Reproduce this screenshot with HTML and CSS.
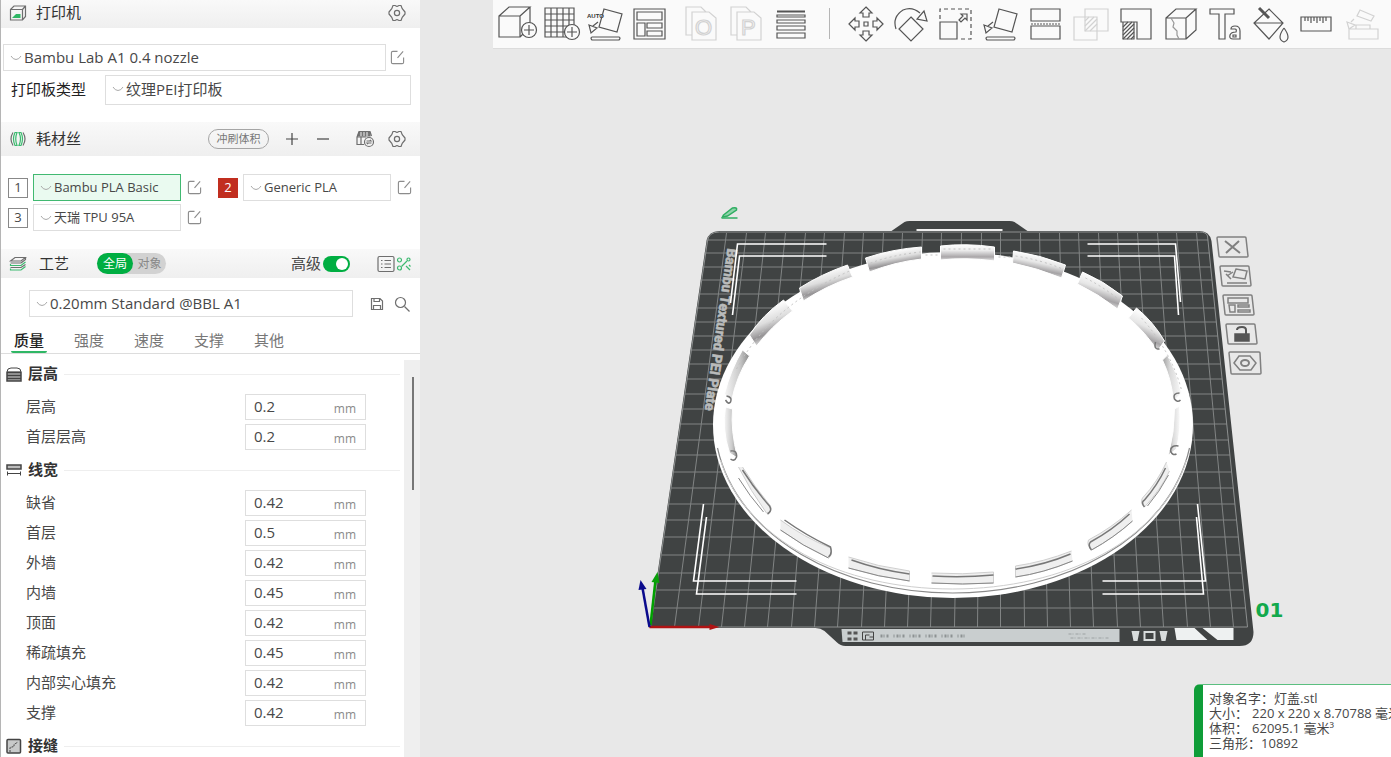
FILE: index.html
```html
<!DOCTYPE html>
<html lang="zh-CN">
<head>
  <meta charset="UTF-8" />
  <meta name="viewport" content="width=device-width, initial-scale=1.0" />
  <title>灯盖.stl</title>
  <link rel="stylesheet" href="styles.css">
</head>
<body>
  <!-- shared icons -->
  <svg class="defs" width="0" height="0" aria-hidden="true">
    <symbol id="i-gear" viewBox="0 0 18 18">
      <path d="M5 1.5 H7 L9 2.5 L11 1.5 H13 L14.2 4.6 L17 8 V10 L14.2 13.4 L13 16.5 H11 L9 15.5 L7 16.5 H5 L3.8 13.4 L1 10 V8 L3.8 4.6 Z" stroke-linejoin="round"/>
      <circle cx="9" cy="9" r="2.6"/>
    </symbol>
    <symbol id="i-edit" viewBox="0 0 16 16">
      <path d="M8 1.5 H3 Q1.500 1.500 1.500 3 V13 Q1.500 14.500 3 14.500 H13 Q14.500 14.500 14.500 13 V8 M8 8.500 L14 1.500"/>
    </symbol>
    <symbol id="i-down" viewBox="0 0 12 12">
      <path d="M1 4 Q3 7.500 6 7.500 Q9 7.500 11 4"/>
    </symbol>
  </svg>

  <aside class="sidebar">
    <header class="bar bar-printer">
      <svg class="icon" viewBox="0 0 18 18"><path d="M1.5 5.500 L5 2 H16.500 V12.500 L13.500 16 H1.500 Z M1.500 5.500 H13.500 V16 M13.500 5.500 L16.500 2"/><path class="green-fill" d="M3 14 L7 10 H11.500 V14 Z"/></svg>
      <h2>打印机</h2>
      <button class="icon-btn push" aria-label="打印机设置"><svg class="icon"><use href="#i-gear"/></svg></button>
    </header>

    <div class="printer">
      <div class="line">
        <div class="combo combo-printer">
          <svg class="chev"><use href="#i-down"/></svg>
          <select aria-label="打印机"><option>Bambu Lab A1 0.4 nozzle</option></select>
        </div>
        <button class="icon-btn" aria-label="编辑打印机"><svg class="icon edit"><use href="#i-edit"/></svg></button>
      </div>
      <div class="line plate-line">
        <label for="plate">打印板类型</label>
        <div class="combo combo-plate">
          <svg class="chev"><use href="#i-down"/></svg>
          <select id="plate"><option>纹理PEI打印板</option></select>
        </div>
      </div>
    </div>

    <header class="bar bar-filament">
      <svg class="icon" viewBox="0 0 18 18"><path d="M4 2.500 Q0 9 4 15.500 M14 2.500 Q18 9 14 15.500"/><path class="green" d="M6 2.500 Q3 9 6 15.500 H8 Q5.500 9 8 2.500 Z M10 2.500 Q13 9 10 15.500 H12 Q15 9 12 2.500 Z"/></svg>
      <h2>耗材丝</h2>
      <button class="pill push">冲刷体积</button>
      <button class="icon-btn add" aria-label="添加耗材"><svg class="icon dark" viewBox="0 0 18 18"><path d="M9 3 V15 M3 9 H15"/></svg></button>
      <button class="icon-btn remove" aria-label="移除耗材"><svg class="icon dark" viewBox="0 0 18 18"><path d="M3 9 H15"/></svg></button>
      <button class="icon-btn sync" aria-label="同步耗材"><svg class="icon" viewBox="0 0 18 18"><path d="M8 14.500 H1 V7 L3 1.500 H14 L15.500 6 M1 7 H10 M5 7 V14"/><path d="M3 2.500 H14 V6 H2 Z" fill="#777"/><path d="M5 2 V6 M8 2 V6 M11 2 V6" stroke="#ddd"/><circle cx="13" cy="12" r="4.500"/><path d="M10.500 11 H15 L14 9.800 M15.500 13 H11 L12 14.200"/></svg></button>
      <button class="icon-btn" aria-label="耗材设置"><svg class="icon"><use href="#i-gear"/></svg></button>
    </header>

    <div class="filaments">
      <div class="filament">
        <span class="num">1</span>
        <div class="combo active"><svg class="chev"><use href="#i-down"/></svg><select aria-label="耗材 1"><option>Bambu PLA Basic</option></select></div>
        <button class="icon-btn" aria-label="编辑耗材 1"><svg class="icon edit"><use href="#i-edit"/></svg></button>
      </div>
      <div class="filament">
        <span class="num red">2</span>
        <div class="combo"><svg class="chev"><use href="#i-down"/></svg><select aria-label="耗材 2"><option>Generic PLA</option></select></div>
        <button class="icon-btn" aria-label="编辑耗材 2"><svg class="icon edit"><use href="#i-edit"/></svg></button>
      </div>
      <div class="filament">
        <span class="num">3</span>
        <div class="combo"><svg class="chev"><use href="#i-down"/></svg><select aria-label="耗材 3"><option>天瑞 TPU 95A</option></select></div>
        <button class="icon-btn" aria-label="编辑耗材 3"><svg class="icon edit"><use href="#i-edit"/></svg></button>
      </div>
    </div>

    <header class="bar bar-process">
      <svg class="icon" viewBox="0 0 18 18"><path d="M1.500 6 L6 2.500 H16.500 L12 6 Z M16.500 2.500 V4.500 L12 8"/><path class="green" d="M1.500 9 V10.500 H12 L16.500 7 M1.500 13.500 V15 H12 L16.500 11.500"/><path d="M1.500 8 H12 M1.500 12.500 H12 L16.500 9.500"/></svg>
      <h2>工艺</h2>
      <div class="scope">
        <button class="on">全局</button><button>对象</button>
      </div>
      <label class="advanced push" for="advanced">高级</label>
      <input class="switch" id="advanced" type="checkbox" checked>
      <button class="icon-btn list" aria-label="参数列表"><svg class="icon" viewBox="0 0 18 18"><rect x="1" y="1.500" width="16" height="15" rx="1.500"/><path d="M4 5.500 H5.500 M4 9 H5.500 M4 12.500 H5.500 M7.500 5.500 H14 M7.500 9 H14 M7.500 12.500 H14"/></svg></button>
      <button class="icon-btn compare" aria-label="比较预设"><svg class="icon green" viewBox="0 0 16 16"><circle cx="3.500" cy="4" r="2"/><circle cx="12.500" cy="3.500" r="1.500"/><circle cx="3.500" cy="12" r="2"/><path d="M5.500 10.500 L11 5 M10 10 L14 14 M13 9 L14.500 10.500"/></svg></button>
    </header>

    <div class="preset">
      <div class="combo">
        <svg class="chev"><use href="#i-down"/></svg>
        <select aria-label="工艺预设"><option>0.20mm Standard @BBL A1</option></select>
      </div>
      <button class="icon-btn" aria-label="保存"><svg class="icon small" viewBox="0 0 14 14"><path d="M1.500 1.500 H10 L12.500 4 V12.500 H1.500 Z M4 1.500 V4.500 H9.500 V1.500 M3.500 12.500 V8.500 H10.500 V12.500"/></svg></button>
      <button class="icon-btn" aria-label="搜索"><svg class="icon" viewBox="0 0 18 18"><circle cx="7.500" cy="7.500" r="5"/><path d="M11.500 11.500 L16.500 16.500"/></svg></button>
    </div>

    <nav class="tabs">
      <button class="current">质量</button>
      <button>强度</button>
      <button>速度</button>
      <button>支撑</button>
      <button>其他</button>
    </nav>

    <div class="params">
      <div class="param-list">
        <section>
          <h3><svg class="icon fat" viewBox="0 0 16 16"><path d="M1 6 Q1 2 5 2 H11 Q15 2 15 6 Z" stroke-width="1"/><path d="M1 6.500 H15 V15 H1 Z" fill="#aaa"/><path d="M1 9.500 H15 M1 12.500 H15"/></svg><span>层高</span></h3>
          <div class="row"><label for="p1">层高</label><span class="field"><input id="p1" value="0.2"><i>mm</i></span></div>
          <div class="row"><label for="p2">首层层高</label><span class="field"><input id="p2" value="0.2"><i>mm</i></span></div>
        </section>
        <section>
          <h3><svg class="icon fat" viewBox="0 0 16 16"><path d="M1 3 H15 V7 H1 Z" fill="#bbb"/><path d="M1 11.500 H15 M1.500 9.500 V13.500 M14.500 9.500 V13.500" stroke-width="1"/></svg><span>线宽</span></h3>
          <div class="row"><label for="p3">缺省</label><span class="field"><input id="p3" value="0.42"><i>mm</i></span></div>
          <div class="row"><label for="p4">首层</label><span class="field"><input id="p4" value="0.5"><i>mm</i></span></div>
          <div class="row"><label for="p5">外墙</label><span class="field"><input id="p5" value="0.42"><i>mm</i></span></div>
          <div class="row"><label for="p6">内墙</label><span class="field"><input id="p6" value="0.45"><i>mm</i></span></div>
          <div class="row"><label for="p7">顶面</label><span class="field"><input id="p7" value="0.42"><i>mm</i></span></div>
          <div class="row"><label for="p8">稀疏填充</label><span class="field"><input id="p8" value="0.45"><i>mm</i></span></div>
          <div class="row"><label for="p9">内部实心填充</label><span class="field"><input id="p9" value="0.42"><i>mm</i></span></div>
          <div class="row"><label for="p10">支撑</label><span class="field"><input id="p10" value="0.42"><i>mm</i></span></div>
        </section>
        <section>
          <h3><svg class="icon fat" viewBox="0 0 16 16"><rect x="1" y="1.500" width="13.500" height="13.500" rx="1" fill="#c8caca"/><path d="M4 14 V9.500 L8 8.500 V6.500 L12 4" stroke-width="1" stroke-dasharray="2 1"/></svg><span>接缝</span></h3>
        </section>
      </div>
      <div class="scrollbar"><div class="thumb"></div></div>
    </div>
  </aside>

  <main class="viewport">
    <svg class="scene" viewBox="421 0 970 757" preserveAspectRatio="xMidYMid meet" role="img" aria-label="灯盖">
      <defs>
        <clipPath id="bed"><path d="M708 233 H1208 L1248 627 H652 Z"/></clipPath>
        <linearGradient id="gTop" x1="0" y1="0" x2="0" y2="1"><stop offset="0" stop-color="#fdfdfd"/><stop offset=".35" stop-color="#ececec"/><stop offset=".75" stop-color="#a9a6a8"/><stop offset="1" stop-color="#eee"/></linearGradient>
        <linearGradient id="gLeft" x1="0.350" y1="0.200" x2="0.600" y2="0.850"><stop offset="0" stop-color="#fdfdfd"/><stop offset=".4" stop-color="#dedede"/><stop offset=".75" stop-color="#959395"/><stop offset="1" stop-color="#e4e4e4"/></linearGradient>
        <linearGradient id="gRight" x1="0.650" y1="0.200" x2="0.400" y2="0.850"><stop offset="0" stop-color="#fdfdfd"/><stop offset=".4" stop-color="#e6e6e6"/><stop offset=".75" stop-color="#a5a3a5"/><stop offset="1" stop-color="#e8e8e8"/></linearGradient>
        <linearGradient id="gSide" x1="0" y1="0" x2="1" y2="0"><stop offset="0" stop-color="#f6f6f6"/><stop offset=".6" stop-color="#cacaca"/><stop offset="1" stop-color="#8a8a8a"/></linearGradient>
        <linearGradient id="gSideR" x1="1" y1="0" x2="0" y2="0"><stop offset="0" stop-color="#fafafa"/><stop offset=".6" stop-color="#dadada"/><stop offset="1" stop-color="#a0a0a0"/></linearGradient>
      </defs>

      <!-- build plate -->
      <path fill="#404343" d="M707 241 Q709 231 720 231 H892 L905 222 Q907 221 910 221 H1010 Q1013 221 1015 222 L1028 231 H1200 Q1210 231 1212 241 L1254 632 Q1254 646 1240 646 H846 Q841 646 837 642 L825 631 Q821 628 816 628 H650 Z"/>
      <path stroke="#efefef" stroke-width="2" d="M917 230 H1003"/>
      <g clip-path="url(#bed)" stroke="#818484" stroke-width="1" fill="none">
        <path d="M640 240 H1260 M640 253 H1260 M640 267 H1260 M640 280 H1260 M640 294 H1260 M640 308 H1260 M640 322 H1260 M640 336 H1260 M640 350 H1260 M640 364 H1260 M640 379 H1260 M640 394 H1260 M640 409 H1260 M640 424 H1260 M640 440 H1260 M640 455 H1260 M640 472 H1260 M640 488 H1260 M640 504 H1260 M640 520 H1260 M640 537 H1260 M640 555 H1260 M640 573 H1260 M640 590 H1260 M640 608 H1260"/>
        <path d="M727 233 L675 627 M747 233 L699 627 M766 233 L722 627 M786 233 L745 627 M806 233 L768 627 M825 233 L792 627 M845 233 L815 627 M864 233 L838 627 M884 233 L862 627 M903 233 L885 627 M923 233 L908 627 M942 233 L931 627 M962 233 L955 627 M982 233 L978 627 M1001 233 L1001 627 M1021 233 L1025 627 M1040 233 L1048 627 M1060 233 L1071 627 M1079 233 L1094 627 M1099 233 L1118 627 M1118 233 L1141 627 M1138 233 L1164 627 M1158 233 L1188 627 M1177 233 L1211 627 M1197 233 L1234 627"/>
      </g>
      <path d="M650 627 H1248 L1208 236 Q1207 232 1200 232 H720 Q709 232 708 241 L651 627" fill="none" stroke="#8d9090"/>
      <text class="plate-name" transform="translate(728 248) rotate(98)">Bambu Textured PEI Plate</text>
      <path fill="none" stroke="#fff" stroke-width="1.600" d="M827 244 H738 L731 303 M827 256 H740 L733 315 M1088 244 H1176 L1181 302 M1088 256 H1175 L1179 315 M704 504 L694 581 H797 M707 517 L697 594 H797 M1198 504 L1206 581 H1103 M1197 517 L1204 594 H1103"/>

      <!-- front strip -->
      <path fill="#c9cecf" d="M842 629 H1120 V642 H843 Z"/>
      <path fill="none" stroke="#555" stroke-width="3" stroke-dasharray="4 2" d="M848 633 H858 M848 639 H858"/>
      <path fill="none" stroke="#444" d="M863 640 V632 H874 V640 Z M866 640 V635 H870 M870 637 H874"/>
      <path fill="none" stroke="#8d9293" stroke-width="3" stroke-dasharray="2 1 1 2 2 5 1 2" d="M881 636 H966"/>
      <path fill="none" stroke="#9da2a3" stroke-dasharray="3 1 1 2" d="M1069 634 H1086 M1071 638 H1109"/>
      <path fill="#d8dcdc" d="M1132 631 H1140 L1138 641 H1134 Z M1160 631 H1168 L1166 641 H1162 Z"/>
      <rect x="1145" y="632" width="10" height="8" fill="none" stroke="#d8dcdc" stroke-width="2"/>
      <path fill="#eef1f1" d="M1175 628 H1195 L1208 640 H1177 Z M1203 628 H1234 V640 H1218 Z"/>

      <!-- lamp cover -->
      <ellipse cx="953.500" cy="425" rx="240" ry="173" fill="#fff"/>
      <path fill="none" stroke="#8a8a8a" stroke-width="1.200" d="M718 448 C738 538 842 593 953 593 C1065 593 1170 538 1190 448"/>
      <path fill="none" stroke="#cecece" d="M721 460 C746 540 842 589 953 589 C1065 589 1162 540 1187 460"/>
      <g stroke="#fff" stroke-width="1">
        <path fill="url(#gTop)" d="M941 246 Q967 243 995 247 V261 Q967 257 941 260 Z"/>
        <path fill="url(#gLeft)" d="M866 258 Q893 249 922 247 V259 Q895 262 870 272 Z"/>
        <path fill="url(#gLeft)" d="M800 288 Q822 274 848 265 L853 277 Q826 286 804 301 Z"/>
        <path fill="url(#gLeft)" d="M784 300 Q763 315 750 335 L757 346 Q772 326 793 311 Z"/>
        <path fill="url(#gSide)" d="M743 350 Q731 370 725 394 L732 401 Q737 376 750 356 Z"/>
        <path fill="url(#gSide)" d="M726 407 Q722 428 730 453 L738 458 Q731 430 733 409 Z"/>
        <path fill="url(#gRight)" d="M1014 251 Q1041 255 1066 265 L1062 278 Q1038 268 1013 263 Z"/>
        <path fill="url(#gRight)" d="M1083 272 Q1104 281 1123 296 L1118 309 Q1099 294 1078 284 Z"/>
        <path fill="url(#gRight)" d="M1137 308 Q1154 322 1165 341 L1158 351 Q1146 332 1129 318 Z"/>
        <path fill="url(#gSideR)" d="M1168 355 Q1178 373 1182 393 L1174 401 Q1172 379 1163 360 Z"/>
        <path fill="url(#gSideR)" d="M1180 406 Q1182 428 1177 449 L1169 455 Q1175 432 1175 409 Z"/>
      </g>
      <g fill="#efefef" stroke="#cfcfcf" stroke-width="1">
        <path d="M739 467 Q751 491 767 513 Q773 512 771 506 Q755 487 743 467"/>
        <path d="M781 520 Q804 537 831 548 Q834 554 829 558 Q803 546 781 530"/>
        <path d="M849 557 Q879 567 910 571 V581 Q879 577 849 568"/>
        <path d="M932 573 Q963 575 994 572 V583 Q963 585 932 583"/>
        <path d="M1072 551 Q1044 562 1016 566 V577 Q1044 573 1073 561"/>
        <path d="M1132 510 Q1112 528 1089 540 Q1087 545 1092 550 Q1114 538 1133 521"/>
        <path d="M1167 462 Q1158 482 1143 498 Q1140 503 1145 507 Q1161 490 1170 471"/>
      </g>
      <path fill="none" stroke="#777" stroke-width="1.500" d="M743 470 Q755 489 770 506 Q773 511 768 514 M785 520 Q806 535 831 547 Q833 554 829 557 M852 560 Q880 570 910 574 M933 576 Q963 578 994 575 M1016 569 Q1045 565 1071 554 M1092 550 Q1088 545 1091 542 Q1113 530 1130 514 M1145 507 Q1141 502 1145 500 Q1158 485 1166 468"/>
      <path fill="none" stroke="#888" d="M739 478 Q750 496 764 512 M781 530 Q803 546 829 558 M849 568 Q879 577 910 581 M932 583 Q963 585 994 583 M1016 577 Q1044 573 1073 561 M1092 550 Q1114 538 1133 521 M1148 506 Q1160 492 1169 475"/>
      <path fill="none" stroke="#777" stroke-width="1.500" d="M727 396 Q733 397 731 402 Q729 405 726 400 M731 451 Q738 450 737 457 Q735 462 731 459 M1156 342 Q1154 350 1160 349 M1180 393 Q1173 393 1175 399 Q1178 403 1181 400 M1179 446 Q1171 445 1171 451 Q1173 456 1177 454"/>
      <path fill="none" stroke="#c2c2c2" stroke-width="1" stroke-dasharray="2 3" d="M737 369 Q771 306 850 271 M871 263 Q893 255 921 252 M926 255 H938 M944 249 H992 M999 257 H1011 M1016 256 Q1042 260 1063 269 M1086 278 Q1104 287 1120 300 M1142 318 Q1172 352 1182 390"/>

      <!-- axes -->
      <path stroke="#b01313" stroke-width="2.500" d="M650 627 H711"/><path fill="#b01313" d="M710 624 L720 627 L710 630 Z"/>
      <path stroke="#00a000" stroke-width="2.500" d="M651 625 L656 580"/><path fill="#0aa00a" d="M652 582 L658 572 L660 583 Z"/>
      <path stroke="#0a0a8c" stroke-width="2.500" d="M650 627 L643 588"/><path fill="#0a0a8c" d="M639 590 L641 580 L647 589 Z"/>

      <g fill="none" stroke="#2fae62" stroke-width="1.500"><path d="M722 218 H738" /><path d="M724 215 L733 208 Q738 207 737 210 L728 216 L723 217 Z" fill="#8fd3aa"/></g>
      <text class="plate-no" x="1256" y="617">01</text>
    </svg>

    <div class="toolbar" role="toolbar">
      <button aria-label="添加"><svg viewBox="0 0 45 45"><path d="M5 15 H26 V36 H5 Z M5 15 L15 6 H36 L26 15 M36 6 V22 M26 36 L29 33"/><circle class="bg" cx="35" cy="29" r="7.500"/><path d="M35 24 V34 M30 29 H40"/></svg></button>
      <button aria-label="添加盘"><svg viewBox="0 0 45 45"><path d="M6 7 H35 V36 H6 Z M12 7 V36 M18 7 V36 M24 7 V36 M30 7 V36 M6 13 H35 M6 19 H35 M6 25 H35 M6 31 H35"/><circle class="bg" cx="33" cy="31" r="7.500"/><path d="M33 26 V36 M28 31 H38"/></svg></button>
      <button aria-label="自动朝向"><svg viewBox="0 0 45 45"><text class="auto" x="3" y="17">AUTO</text><path d="M20 8 L38 13 L33 31 L15 26 Z M8 36 H35 Q37 37 35 39 H8 Q6 37 8 36 M14 21 L9 25 M5 24 L13 27 L7 32 Z"/></svg></button>
      <button aria-label="整理"><svg viewBox="0 0 45 45"><path d="M5 8 H36 V38 H5 Z M8 11 H33 V19 H8 Z M8 22 H16 V35 H8 Z M18 22 H33 V27 H18 Z M18 30 H33 V35 H18 Z"/></svg></button>
      <button class="gap" disabled aria-label="拆分为对象"><svg viewBox="0 0 45 45"><path d="M13 34 H7 V6 H22 L27 11 M13 11 H30 L37 17 V39 H13 Z"/><text class="glyph" x="16" y="34">O</text></svg></button>
      <button disabled aria-label="拆分为零件"><svg viewBox="0 0 45 45"><path d="M13 34 H7 V6 H22 L27 11 M13 11 H30 L37 17 V39 H13 Z"/><text class="glyph" x="17" y="34">P</text></svg></button>
      <button aria-label="可变层高"><svg viewBox="0 0 45 45"><path d="M8 10 H36 M8 11 H36 M8 14 H36 V16 H8 Z M8 19 H36 V22 H8 Z M8 25 H36 V29 H8 Z M8 32 H36 V37 H8 Z"/></svg></button>
      <span class="sep"></span>
      <button aria-label="移动"><svg viewBox="0 0 45 45"><path d="M20 21 H24 V25 H20 Z M22 6 L28 12 H25 V16 H19 V12 H16 Z M22 40 L28 34 H25 V30 H19 V34 H16 Z M5 23 L11 17 V20 H15 V26 H11 V29 Z M39 23 L33 17 V20 H29 V26 H33 V29 Z"/></svg></button>
      <button aria-label="旋转"><svg viewBox="0 0 45 45"><path d="M22 16 L34 28 L22 40 L10 28 Z M7 28 Q3 16 14 9 Q23 5 31 12 M35 10 L38 20 L28 18 Z"/></svg></button>
      <button aria-label="缩放"><svg viewBox="0 0 45 45"><path d="M6 21 H23 V38 H6 Z"/><path stroke-dasharray="4 3" d="M6 18 V8 H37 V38 H26"/><path d="M25 19 L29 15 L27 13 H33 V19 L31 17 L27 21 Z"/></svg></button>
      <button aria-label="放平"><svg viewBox="0 0 45 45"><path d="M20 8 L38 13 L33 31 L15 26 Z M8 36 H35 Q37 37 35 39 H8 Q6 37 8 36 M14 21 L9 25 M5 24 L13 27 L7 32 Z"/></svg></button>
      <button aria-label="切割"><svg viewBox="0 0 45 45"><path d="M7 8 H36 V20 H7 Z M7 25 H36 V38 H7 Z"/><path stroke-dasharray="2 1" d="M7 23 H36"/></svg></button>
      <button disabled aria-label="布尔运算"><svg viewBox="0 0 45 45"><path d="M16 8 H39 V30 H16 Z M5 16 H28 V39 H5 Z"/><path d="M16 20 L20 16 M16 25 L25 16 M16 30 L28 18 M21 30 L28 23"/></svg></button>
      <button aria-label="支撑绘制"><svg viewBox="0 0 45 45"><path d="M7 8 H37 V38 H23 V21 H7 Z M9 21 V38 H20 V21"/><path d="M9 26 L14 21 M9 30 L18 21 M9 34 L20 23 M9 38 L20 27 M13 38 L20 31 M17 38 L20 35"/></svg></button>
      <button aria-label="缝合线绘制"><svg viewBox="0 0 45 45"><path d="M7 17 H27 V38 H7 Z M7 17 L17 8 H37 L27 17 M37 8 V29 L27 38"/><path stroke="#999" d="M12 17 L15 22 L14 26 L18 30 V34 L20 38"/></svg></button>
      <button aria-label="文字"><svg viewBox="0 0 45 45"><path d="M6 8 H30 V13 H21 V38 H15 V13 H6 Z M27 28 Q27 25 31 25 Q36 25 36 30 V38 H29 Q25 38 26 34 Q27 31 32 31 Q33 28 31 28 Z M32 34 H29 V36 H32 Z"/></svg></button>
      <button aria-label="颜色绘制"><svg viewBox="0 0 45 45"><path d="M20 8 L34 22 L20 38 L5 22 Z M5 22 H34 M35 27 Q43 38 35 41 Q27 38 35 27"/><path d="M10 7 L20 17" stroke-width="3"/></svg></button>
      <button aria-label="测量"><svg viewBox="0 0 45 45"><path d="M7 16 H37 V30 H7 Z M11 16 V20 M14 16 V20 M17 16 V22 M20 16 V20 M23 16 V22 M26 16 V20 M29 16 V22 M32 16 V20"/></svg></button>
      <button disabled aria-label="装配"><svg viewBox="0 0 45 45"><path d="M10 28 H39 V38 H10 Z M17 24 H31 V28 H17 Z M21 9 L35 15 L32 20 L18 15 Z M8 21 L16 24 L10 28 Z M15 18 L12 21"/></svg></button>
    </div>

    <div class="plate-tools">
      <button aria-label="删除盘"><svg viewBox="0 0 34 24"><path d="M2 2 H29 Q30 2 30 3 L32 21 Q32 22 31 22 H4 Q3 22 3 21 L1 3 Q1 2 2 2 Z"/><path d="M9 6 L24 18 M23 6 L10 18" stroke-width="2"/></svg></button>
      <button aria-label="自动朝向盘"><svg viewBox="0 0 34 24"><path d="M2 2 H29 Q30 2 30 3 L32 21 Q32 22 31 22 H4 Q3 22 3 21 L1 3 Q1 2 2 2 Z"/><path d="M17 5 L28 7 L26 15 L14 13 Z M8 19 H28 M5 7 L12 8 M14 8 L8 12 M7 10 L12 15 Z"/></svg></button>
      <button aria-label="整理盘"><svg viewBox="0 0 34 24"><path d="M2 2 H29 Q30 2 30 3 L32 21 Q32 22 31 22 H4 Q3 22 3 21 L1 3 Q1 2 2 2 Z"/><path d="M6 5 H26 V10 H6 Z M7 12 H13 V19 H8 Z M16 12 H27 V14 H16 Z M16 17 H28 V19 H16 Z"/></svg></button>
      <button aria-label="锁定盘"><svg viewBox="0 0 34 24"><path d="M2 2 H29 Q30 2 30 3 L32 21 Q32 22 31 22 H4 Q3 22 3 21 L1 3 Q1 2 2 2 Z"/><path d="M10 12 H24 V19 H10 Z" fill="#555" stroke="#555"/><path d="M12 8 Q12 5 17 5 Q21 5 21 8 V12" stroke="#555" stroke-width="2"/></svg></button>
      <button aria-label="盘设置"><svg viewBox="0 0 34 24"><path d="M2 1 H31 Q32 1 32 2 L33 22 Q33 23 32 23 H4 Q3 23 3 22 L1 2 Q1 1 2 1 Z"/><path d="M6 12 L11 5 H22 L28 12 L23 19 H12 Z"/><ellipse cx="17" cy="12" rx="4" ry="3" stroke-width="2"/></svg></button>
    </div>

    <dl class="info">
      <div><dt>对象名字：</dt><dd>灯盖.stl</dd></div>
      <div class="measure"><dt>大小：</dt><dd>220 x 220 x 8.70788 毫米</dd></div>
      <div class="measure"><dt>体积：</dt><dd>62095.1 毫米³</dd></div>
      <div><dt>三角形：</dt><dd>10892</dd></div>
    </dl>
  </main>
</body>
</html>
```
FILE: styles.css
```css
* {
  box-sizing: border-box;
}
body {
  margin: 0;
  height: 100vh;
  display: flex;
  overflow: hidden;
  background: #e8e8e8;
  color: #484848;
  font-family: "Open Sans", "Noto Sans CJK SC", sans-serif;
  font-size: 15px;
}
button, input, select {
  font: inherit;
  color: inherit;
}
button {
  padding: 0;
  border: none;
  background: none;
  cursor: pointer;
}
h2, h3 {
  margin: 0;
  font-size: 15px;
}
h2 {
  font-weight: 400;
  color: #333;
}
.defs {
  position: absolute;
}

/* sidebar */
.sidebar {
  flex: none;
  width: 420px;
  display: flex;
  flex-direction: column;
  background: #fff;
  border-left: 1px solid #b5b5b5;
}
.icon {
  display: block;
  width: 18px;
  height: 18px;
  fill: none;
  stroke: #6e6e6e;
  stroke-width: 1.2;
}
.icon.edit {
  width: 15px;
  height: 15px;
  stroke: #8c8c8c;
}
.icon.small {
  width: 14px;
  height: 14px;
}
.icon.dark {
  stroke: #444;
}
.icon.fat {
  width: 16px;
  height: 16px;
  stroke: #444;
  stroke-width: 1.5;
}
.icon .green, .icon.green {
  stroke: #3dba70;
}
.icon .green-fill {
  fill: #2fb765;
  stroke: none;
}
.icon-btn {
  flex: none;
}
.push {
  margin-left: auto;
}
.bar {
  flex: none;
  display: flex;
  align-items: center;
  padding: 0 14px 0 8px;
  background: linear-gradient(#f9f9f9, #efefef);
}
.bar h2 {
  margin-left: 9px;
  padding-bottom: 3px;
}
.bar-printer {
  height: 28px;
  padding-bottom: 3px;
}
.bar-filament {
  height: 34px;
}
.bar-process {
  height: 29px;
  padding-right: 8px;
}
.bar-process h2 {
  margin-left: 12px;
}
.advanced {
  padding-bottom: 3px;
}
.pill {
  width: 61px;
  height: 20px;
  border: 1px solid #a5a5a5;
  border-radius: 10px;
  font-size: 11px;
  line-height: 16px;
  color: #777;
}
.add {
  margin-left: 14px;
}
.remove {
  margin-left: 13px;
}
.sync {
  margin: 0 14px 0 24px;
}

.combo {
  position: relative;
  height: 27px;
}
.combo select {
  display: block;
  width: 100%;
  height: 100%;
  padding: 0 8px 2px 20px;
  appearance: none;
  border: 1px solid #dedede;
  border-radius: 0;
  background: #fff;
  outline: none;
}
.chev {
  position: absolute;
  left: 7px;
  top: 8px;
  width: 12px;
  height: 12px;
  fill: none;
  stroke: #aaa;
  pointer-events: none;
}
.printer {
  padding: 16px 9px 17px 2px;
}
.line {
  display: flex;
  align-items: center;
}
.combo-printer {
  flex: 1;
  margin-right: 4px;
}
.line .edit {
  margin-right: 6px;
}
.plate-line {
  margin-top: 4px;
}
.plate-line label {
  width: 102px;
  padding: 0 0 3px 8px;
  color: #222;
}
.combo-plate {
  flex: 1;
  height: 30px;
}

.filaments {
  display: grid;
  grid-template-columns: 194px 194px;
  gap: 3px 16px;
  padding: 18px 7px;
  font-size: 13px;
}
.filament {
  display: flex;
  align-items: center;
}
.filament .combo {
  flex: 1;
  margin: 0 6px 0 5px;
}
.filament .active select {
  border-color: #41b971;
  background: #eafaf0;
}
.num {
  width: 20px;
  height: 20px;
  border: 1px solid #888;
  line-height: 17px;
  text-align: center;
}
.num.red {
  border-color: #c12e1f;
  background: #c12e1f;
  color: #fff;
}

.scope {
  display: flex;
  width: 69px;
  height: 21px;
  margin-left: 28px;
  border-radius: 11px;
  background: #d2d2d2;
  font-size: 12px;
}
.scope button {
  flex: 1;
  border-radius: 11px;
  line-height: 19px;
  color: #888;
}
.scope .on {
  flex: none;
  width: 36px;
  background: #00ae42;
  color: #fff;
}
.switch {
  appearance: none;
  width: 27px;
  height: 16px;
  margin: 0 27px 0 2px;
  border-radius: 8px;
  background: #00ae42;
}
.switch::after {
  content: "";
  display: block;
  width: 12px;
  height: 12px;
  margin: 2px 0 0 13px;
  border-radius: 50%;
  background: #fff;
}
.compare .icon {
  width: 16px;
  height: 16px;
  margin-left: 1px;
}

.preset {
  display: flex;
  align-items: center;
  padding: 12px 9px 0 28px;
}
.preset .combo {
  flex: 1;
  margin-right: 17px;
}
.preset .icon-btn + .icon-btn {
  margin-left: 9px;
}

.tabs {
  display: flex;
  gap: 24px;
  height: 37px;
  padding: 12px 0 0 10px;
  border-bottom: 1px solid #ddd;
}
.tabs button {
  width: 36px;
  border-bottom: 2px solid transparent;
  line-height: 20px;
  color: #777;
}
.tabs .current {
  border-color: #2fb765;
  border-radius: 2px;
  font-weight: 500;
  color: #222;
}

.params {
  flex: 1;
  min-height: 0;
  display: flex;
}
.param-list {
  flex: 1;
  overflow: hidden;
  padding: 2px 4px 0 5px;
}
.param-list h3 {
  display: flex;
  align-items: center;
  gap: 6px;
  height: 36px;
  font-weight: 700;
  color: #333;
}
.param-list h3 span {
  padding-bottom: 3px;
}
.param-list h3::after {
  content: "";
  flex: 1;
  height: 1px;
  background: #eee;
}
.row {
  display: flex;
  align-items: center;
  justify-content: space-between;
  height: 30px;
  padding: 0 34px 0 20px;
}
.row label {
  padding-bottom: 4px;
}
.field {
  display: flex;
  align-items: center;
  width: 121px;
  height: 26px;
  padding: 0 9px 0 8px;
  border: 1px solid #dedede;
}
.field input {
  flex: 1;
  min-width: 0;
  padding: 0 0 2px;
  border: none;
  outline: none;
  background: none;
}
.field i {
  padding-top: 3px;
  font-size: 12px;
  font-style: normal;
  color: #8a8a8a;
}
.scrollbar {
  width: 16px;
  margin-top: 6px;
  padding: 17px 6px 0 8px;
  background: #efefef;
}
.thumb {
  width: 2px;
  height: 113px;
  background: #777;
}

/* 3D view */
.viewport {
  position: relative;
  flex: 1;
  min-width: 0;
}
.scene {
  display: block;
  width: 100%;
  height: 100%;
}
.plate-name {
  fill: #b9bbbb;
  stroke: #b9bbbb;
  stroke-width: 0.6;
  font: 700 14px "Roboto", sans-serif;
}
.plate-no {
  fill: #12a94c;
  font: 700 20px "DejaVu Sans", sans-serif;
}
.toolbar {
  position: absolute;
  top: 0;
  left: 73px;
  right: 0;
  display: flex;
  height: 49px;
  padding: 1px 1px 0;
  border-bottom: 1px solid #dcdcdc;
  background: #fafafa;
}
.toolbar button {
  flex: none;
  width: 45px;
  height: 45px;
}
.toolbar .gap {
  margin-left: 5px;
}
.toolbar svg {
  display: block;
  fill: none;
  stroke: #555;
  stroke-width: 1.2;
}
.toolbar .bg {
  fill: #fafafa;
}
.toolbar :disabled svg {
  stroke: #d2d2d2;
}
.toolbar text {
  font-family: "Liberation Sans", sans-serif;
}
.toolbar .auto {
  fill: #333;
  stroke: none;
  font-size: 6px;
  font-weight: 700;
}
.toolbar .glyph {
  font-size: 22px;
  font-weight: 400;
}
.sep {
  flex: none;
  width: 1px;
  height: 31px;
  margin: 7px 14px 0 15px;
  background: #b5b5b5;
}
.plate-tools {
  position: absolute;
  top: 235px;
  left: 82%;
  display: flex;
  flex-direction: column;
  gap: 5px;
}
.plate-tools button {
  width: 34px;
  height: 24px;
}
.plate-tools button:nth-child(2) {
  margin-left: 3px;
}
.plate-tools button:nth-child(3) {
  margin-left: 6px;
}
.plate-tools button:nth-child(4) {
  margin-left: 9px;
}
.plate-tools button:nth-child(5) {
  margin-left: 12px;
}
.plate-tools svg {
  display: block;
  fill: none;
  stroke: #808080;
  stroke-width: 1.5;
}
.info {
  position: absolute;
  right: 0;
  bottom: 0;
  width: 197px;
  margin: 0;
  padding: 6px 0;
  overflow: hidden;
  border-top: 1px solid #5cbf80;
  border-left: 9px solid #0f9d38;
  border-radius: 6px 0 0 0;
  background: #fff;
  font-size: 13px;
  line-height: 15px;
  white-space: nowrap;
}
.info div {
  display: flex;
  padding-left: 6px;
}
.info .measure {
  gap: 4px;
}
.info dd {
  margin: 0;
}
```
